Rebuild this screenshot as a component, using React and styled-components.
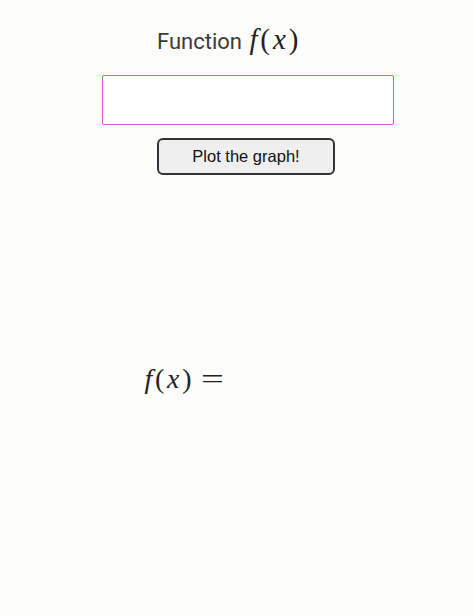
import React, { useState } from 'react';
import styled, { createGlobalStyle } from 'styled-components';

const GlobalStyle = createGlobalStyle`
  html, body {
    margin: 0;
    padding: 0;
    background: #fdfdfb;
  }
  body {
    font-family: Roboto, "Liberation Sans", sans-serif;
    color: #333;
  }
`;

const Page = styled.main`
  width: 474px;
  min-height: 616px;
  padding-top: 24px;
  box-sizing: border-box;
`;

const Title = styled.h2`
  margin: 0 0 0 157px;
  font-size: 22px;
  font-weight: 400;
  line-height: 30px;
  color: #3a3a3a;
`;

const Math = styled.span`
  font-family: "Liberation Serif", "DejaVu Serif", serif;
  font-size: ${({ size }) => size || 26}px;
  color: #222;
  margin-left: ${({ gap }) => gap || 0}px;
`;

const Var = styled.i`
  font-style: italic;
  margin: 0 0.05em;
`;

const Paren = styled.span`
  margin: 0 0.05em;
`;

const Equals = styled.span`
  display: inline-block;
  margin-left: 0.3em;
  transform: scaleX(1.45);
  transform-origin: left center;
`;

const FunctionInput = styled.input`
  display: block;
  margin: 18px 0 0 102px;
  width: 292px;
  height: 50px;
  box-sizing: border-box;
  border: 1px solid #d957d9;
  border-radius: 2px;
  background: #fefefe;
  outline: none;
  font-size: 16px;
`;

const PlotButton = styled.button`
  display: block;
  margin: 13px 0 0 157px;
  width: 178px;
  height: 37px;
  box-sizing: border-box;
  border: 2px solid #333;
  border-radius: 6px;
  background: #efefef;
  font-family: "Liberation Sans", Arial, sans-serif;
  font-size: 16.5px;
  color: #111;
  cursor: pointer;
`;

const Graph = styled.section`
  height: 188px;
`;

const Result = styled.div`
  margin-left: 143px;
  height: 30px;
`;

const Fx = () => (
  <>
    <Var>f</Var>
    <Paren>(</Paren>
    <Var>x</Var>
    <Paren>)</Paren>
  </>
);

const App = () => {
  const [expr, setExpr] = useState('');

  return (
    <>
      <GlobalStyle />
      <Page>
        <Title>
          Function
          <Math size={29} gap={6}>
            <Fx />
          </Math>
        </Title>
        <FunctionInput value={expr} onChange={(e) => setExpr(e.target.value)} />
        <PlotButton>Plot the graph!</PlotButton>
        <Graph />
        <Result>
          <Math size={28}>
            <Fx />
            <Equals>=</Equals>
          </Math>
        </Result>
      </Page>
    </>
  );
};

export default App;
